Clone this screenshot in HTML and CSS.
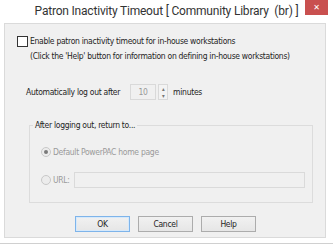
FILE: index.html
```
<!DOCTYPE html>
<html lang="en">
<head>
  <meta charset="UTF-8" />
  <title>Patron Inactivity Timeout</title>
  <link rel="stylesheet" href="styles.css">
</head>
<body>
  <div class="window">
    <div class="titlebar">
      <span></span>
      <span class="title">Patron Inactivity Timeout [ Community Library&nbsp; (br) ]</span>
      <span class="close">&#x2715;</span>
    </div>

    <div class="client">
      <label class="check-row">
        <span class="checkbox"></span>
        Enable patron inactivity timeout for in-house workstations
      </label>
      <div class="hint">(Click the 'Help' button for information on defining in-house workstations)</div>

      <div class="timeout-row">
        <span>Automatically log out after</span>
        <span class="spinner">
          <span class="spin-value">10</span>
          <span class="spin-buttons">
            <span class="spin-up">&#9652;</span>
            <span class="spin-down">&#9662;</span>
          </span>
        </span>
        <span>minutes</span>
      </div>

      <!-- group box: where to go after logout -->
      <div class="group">
        <div class="legend">After logging out, return to...</div>
        <div class="radio-row">
          <span class="radio checked"></span>
          <span class="disabled">Default PowerPAC home page</span>
        </div>
        <div class="radio-row">
          <span class="radio"></span>
          <span class="disabled">URL:</span>
          <span class="url-box"></span>
        </div>
      </div>

      <div class="buttons">
        <button class="btn default">OK</button>
        <button class="btn">Cancel</button>
        <button class="btn">Help</button>
      </div>
    </div>
    <div class="bottom-line"></div>
  </div>
</body>
</html>
```

FILE: styles.css
```
body {
  margin: 0;
  background: #ffffff;
  font-family: "DejaVu Sans Condensed", "Liberation Sans", sans-serif;
  font-size: 8.5px;
  letter-spacing: -0.3px;
  color: #1e1e1e;
}
.window {
  width: 333px;
  height: 245px;
}
.titlebar {
  height: 23px;
  display: grid;
  grid-template-columns: 1fr auto 1fr;
  align-items: start;
}
.title {
  font-family: Roboto, "Open Sans", sans-serif;
  font-size: 12px;
  letter-spacing: -0.2px;
  color: #333;
  margin-top: 4px;
  white-space: nowrap;
}
.close {
  justify-self: end;
  margin-right: 5px;
  width: 23px;
  height: 15px;
  background: #c9504f;
  color: #fff;
  font-size: 8px;
  font-weight: bold;
  font-family: "DejaVu Sans", sans-serif;
  display: flex;
  justify-content: center;
  align-items: center;
}
.client {
  margin-left: 4px;
  width: 322px;
  height: 215px;
  box-sizing: border-box;
  border: 1px solid #dadada;
  background: #f0f0f0;
  padding: 11px 0 0 12px;
}
.check-row {
  display: flex;
  align-items: center;
  gap: 2px;
  height: 12px;
}
.checkbox {
  width: 9px;
  height: 9px;
  border: 1px solid #333;
  background: #fff;
}
.hint {
  margin: 4px 0 0 13px;
  height: 12px;
  white-space: nowrap;
}
.timeout-row {
  display: flex;
  align-items: center;
  margin: 21px 0 0 9px;
  height: 16px;
}
.spinner {
  display: flex;
  margin-left: 10px;
  margin-right: 5px;
}
.spin-value {
  width: 24px;
  height: 14px;
  border: 1px solid #d9d9d9;
  background: #f0f0f0;
  color: #999;
  text-align: center;
  line-height: 14px;
}
.spin-buttons {
  display: flex;
  flex-direction: column;
  margin-left: 2px;
  width: 10px;
  height: 16px;
  border: 1px solid #d9d9d9;
  box-sizing: border-box;
  background: #f3f3f3;
  font-size: 6px;
  color: #777;
  line-height: 7px;
  text-align: center;
}
.group {
  margin: 25px 0 0 12px;
  width: 284px;
  height: 78px;
  box-sizing: border-box;
  border: 1px solid #dcdcdc;
  position: relative;
  padding: 18px 7px 0 11px;
}
.legend {
  position: absolute;
  top: -6px;
  left: 3px;
  padding: 0 2px;
  background: #f0f0f0;
  color: #1e1e1e;
}
.radio-row {
  display: flex;
  align-items: center;
  height: 16px;
  margin-bottom: 12px;
}
.radio {
  width: 8px;
  height: 8px;
  border: 1px solid #c8c8c8;
  border-radius: 50%;
  background: #ececec;
  margin-right: 2px;
  display: flex;
  justify-content: center;
  align-items: center;
}
.radio.checked::after {
  content: "";
  width: 4px;
  height: 4px;
  border-radius: 50%;
  background: #7a7a7a;
}
.disabled {
  color: #9a9a9a;
}
.url-box {
  flex: 1;
  margin-left: 4px;
  height: 14px;
  border: 1px solid #dadada;
  background: #f0f0f0;
}
.buttons {
  display: flex;
  gap: 8px;
  margin: 13px 0 0 58px;
}
.btn {
  width: 55px;
  height: 16px;
  padding: 0;
  border: 1px solid #acacac;
  background: linear-gradient(#f1f1f1, #e6e6e6);
  font-family: inherit;
  font-size: 8.5px;
  letter-spacing: inherit;
  color: #1e1e1e;
}
.btn.default {
  border-color: #7eb4ea;
  box-shadow: inset 0 0 0 1px #d6e9fb;
}
.bottom-line {
  margin-top: 5px;
  height: 1px;
  background: #d0d0d0;
}
```
